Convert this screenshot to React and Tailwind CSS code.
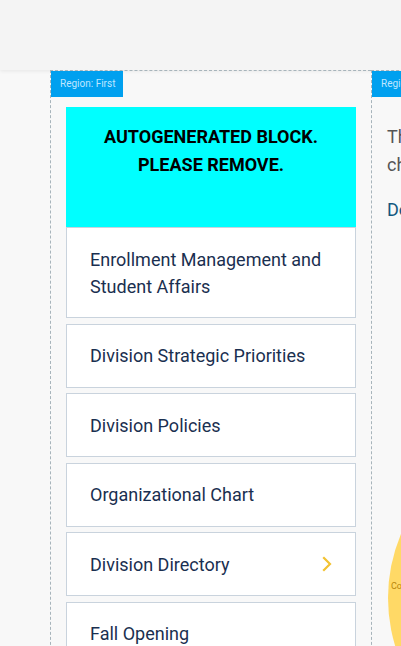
import React from 'react';

const ITEMS = [
  { label: 'Enrollment Management and Student Affairs' },
  { label: 'Division Strategic Priorities' },
  { label: 'Division Policies' },
  { label: 'Organizational Chart' },
  { label: 'Division Directory', arrow: true },
  { label: 'Fall Opening' },
];

function Chevron() {
  return (
    <svg width="10" height="16" viewBox="0 0 10 16" fill="none" className="shrink-0">
      <path d="M2 2l6 6-6 6" stroke="#f2c232" strokeWidth="2.2" strokeLinecap="square" />
    </svg>
  );
}

function RegionLabel({ children }) {
  return (
    <div className="h-[26px] w-[72px] bg-[#00a0ef] text-[10px] leading-[26px] text-[#bfe6ff] px-[9px] whitespace-nowrap overflow-hidden">
      {children}
    </div>
  );
}

export default function App() {
  return (
    <div className="w-[401px] h-[646px] overflow-hidden bg-[#f8f8f8]" style={{ fontFamily: 'Roboto, "Noto Sans", sans-serif' }}>
      <header className="h-[70px] bg-[#f4f4f4] shadow-[0_1px_4px_rgba(0,0,0,0.08)]" />
      <div className="flex">
        <div className="w-[50px] shrink-0" />
        {/* Region: First */}
        <div className="w-[321px] shrink-0 border-l border-t border-dashed border-[#a7b4bb] h-[600px]">
          <RegionLabel>Region: First</RegionLabel>
          <div className="px-[15px] pt-[10px]">
            <div className="h-[120px] bg-[#00ffff] pt-[16px] text-center text-[18px] font-bold leading-[28px] text-black">
              AUTOGENERATED BLOCK.
              <br />
              PLEASE REMOVE.
            </div>
            <ul className="flex flex-col gap-[5.5px]">
              {ITEMS.map((item) => (
                <li
                  key={item.label}
                  className="flex items-center justify-between bg-white border border-[#c9d3dd] pl-[23px] pr-[23px] py-[17.5px] text-[18px] leading-[27px] text-[#1a2f50]"
                >
                  <span>{item.label}</span>
                  {item.arrow && <Chevron />}
                </li>
              ))}
            </ul>
          </div>
        </div>
        {/* Region: Second */}
        <div className="w-[300px] shrink-0 border-l border-t border-dashed border-[#a7b4bb] h-[600px] relative">
          <RegionLabel>Region: Second</RegionLabel>
          <div className="px-[15px] pt-[26px] text-[18px] leading-[28px] text-[#555555]">
            <p className="w-[250px]">The division oversees many changes</p>
            <p className="mt-[17px] text-[#14587f]">Download</p>
          </div>
          <div className="absolute left-[16px] top-[363px] w-[328px] h-[328px] rounded-full bg-[#ffd966] pl-[3px] pt-[146px]">
            <span className="block text-[9px] leading-[12px] text-[#b8860b]">Contact</span>
          </div>
        </div>
      </div>
    </div>
  );
}
